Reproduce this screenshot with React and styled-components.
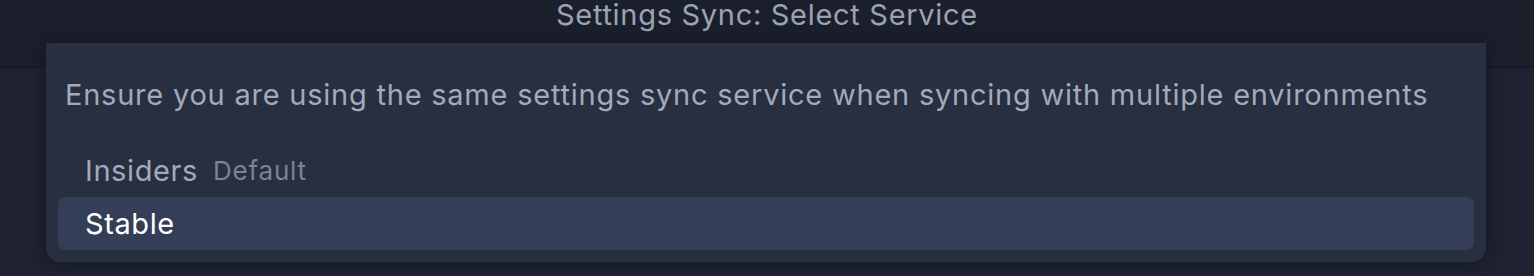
import styled, { createGlobalStyle } from 'styled-components';

const GlobalStyle = createGlobalStyle`
  html, body {
    margin: 0;
    padding: 0;
    background: #1e2231;
  }
  #root {
    width: 1534px;
    height: 276px;
    overflow: hidden;
  }
`;

const Screen = styled.div`
  position: relative;
  width: 1534px;
  height: 276px;
  background: #1e2231;
  font-family: Inter, "Noto Sans", sans-serif;
`;

const TitleBar = styled.div`
  height: 67px;
  background: #1b1f2b;
  border-bottom: 1px solid #14171f;
  display: flex;
  justify-content: center;
`;

const Title = styled.div`
  font-size: 29px;
  line-height: 30px;
  letter-spacing: 0.7px;
  color: #9aa3b4;
`;

const Picker = styled.div`
  position: absolute;
  left: 46px;
  top: 43px;
  width: 1440px;
  height: 219px;
  box-sizing: border-box;
  background: #272f40;
  border-radius: 0 0 14px 14px;
  box-shadow: 0 0 16px rgba(8, 10, 16, 0.45);
  padding: 0 12px 12px;
  display: flex;
  flex-direction: column;
`;

const Message = styled.div`
  height: 101px;
  padding: 1px 7px 0;
  box-sizing: border-box;
  display: flex;
  align-items: center;
  font-size: 29px;
  letter-spacing: 0.77px;
  color: #a2aabb;
`;

const List = styled.div`
  display: flex;
  flex-direction: column;
`;

const Row = styled.div`
  height: 53px;
  padding: 0 27px;
  border-radius: 7px;
  display: flex;
  align-items: center;
  gap: 15px;
  background: ${({ $active }) => ($active ? '#353e57' : 'transparent')};
`;

const Label = styled.span`
  font-size: 29px;
  letter-spacing: 0.6px;
  color: ${({ $active }) => ($active ? '#ffffff' : '#a2aabb')};
`;

const Detail = styled.span`
  font-size: 26px;
  letter-spacing: 0.8px;
  color: #7b8396;
`;

const items = [
  { label: 'Insiders', detail: 'Default' },
  { label: 'Stable', active: true },
];

export default function App() {
  return (
    <Screen>
      <GlobalStyle />
      <TitleBar>
        <Title>Settings Sync: Select Service</Title>
      </TitleBar>
      <Picker>
        <Message>Ensure you are using the same settings sync service when syncing with multiple environments</Message>
        <List>
          {items.map((item) => (
            <Row key={item.label} $active={item.active}>
              <Label $active={item.active}>{item.label}</Label>
              {item.detail && <Detail>{item.detail}</Detail>}
            </Row>
          ))}
        </List>
      </Picker>
    </Screen>
  );
}
